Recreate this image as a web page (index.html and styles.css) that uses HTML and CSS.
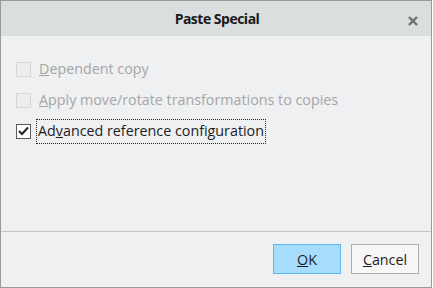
FILE: index.html
```html
<!DOCTYPE html>
<html>
<head>
  <meta charset="UTF-8">
  <title>Paste Special</title>
  <link rel="stylesheet" href="styles.css">
</head>

<body>
  <div class="dialog">
    <div class="titlebar">
      <span class="title">Paste Special</span>
      <span class="close">
        <svg width="10" height="10" viewBox="0 0 10 10"><path d="M1 1 L9 9 M9 1 L1 9" stroke="#707070" stroke-width="2.4"/></svg>
      </span>
    </div>

    <div class="content">
      <label class="option disabled">
        <span class="box"></span>
        <span class="text"><u>D</u>ependent copy</span>
      </label>
      <label class="option disabled">
        <span class="box"></span>
        <span class="text"><u>A</u>pply move/rotate transformations to copies</span>
      </label>
      <label class="option">
        <span class="box checked">
          <svg width="11" height="10" viewBox="0 0 11 10"><path d="M1 5 L4 8 L10 1.5" fill="none" stroke="#222" stroke-width="2"/></svg>
        </span>
        <span class="text focus">Ad<u>v</u>anced reference configuration</span>
      </label>
    </div>

    <div class="footer">
      <button class="btn primary"><u>O</u>K</button>
      <button class="btn"><u>C</u>ancel</button>
    </div>
  </div>
</body>
</html>
```

FILE: styles.css
```css
/* dialog frame */
body {
  margin: 0;
  background: #fff;
  font-family: "Open Sans", "Noto Sans", sans-serif;
}
.dialog {
  width: 430px;
  height: 286px;
  border: 1px solid #9a9a9a;
  background: #eef0f2;
  display: flex;
  flex-direction: column;
}

/* title bar */
.titlebar {
  height: 35px;
  flex: none;
  background: #dadedf;
  display: flex;
  align-items: center;
  justify-content: center;
  position: relative;
}
.title {
  font-size: 14px;
  font-weight: bold;
  color: #1a1a1a;
  letter-spacing: -0.5px;
  margin-left: 2px;
}
.close {
  position: absolute;   /* sits over the bar, right side */
  right: 13px;
  top: 15px;
  display: flex;
}

/* checkboxes */
.content {
  height: 196px;
  flex: none;
  box-sizing: border-box;
  padding: 25px 0 0 15px;
  display: flex;
  flex-direction: column;
  gap: 15px;
  border-bottom: 1px solid #c2c4c6;
}
.option {
  display: flex;
  align-items: center;
  height: 16px;
  font-size: 14.3px;
  color: #1e1e1e;
}
.option.disabled { color: #a6a6a6; }
.box {
  width: 13px;
  height: 13px;
  flex: none;
  border: 1px solid #d6d7d8;
  background: #eceded;
  margin-right: 7px;
  display: flex;
  align-items: center;
  justify-content: center;
}
.box.checked {
  border-color: #5a5a5a;
  background: #fff;
}
.text { padding: 1px 1px 2px; line-height: 20px; }
.text.focus { outline: 1px dotted #222; margin-left: -1px; }

/* buttons */
.footer {
  height: 55px;
  flex: none;
  box-sizing: border-box;
  display: flex;
  justify-content: flex-end;
  align-items: flex-start;
  gap: 10px;
  padding: 12px 12px 0 0;
}
.btn {
  width: 68px;
  height: 30px;
  border: 1px solid #adadad;
  background: #f7f7f7;
  font-family: inherit;
  font-size: 14.3px;
  color: #1e1e1e;
  padding: 0;
}
.btn.primary {
  background: #a6dcfc;
  border-color: #5cbaf0;
}
```
